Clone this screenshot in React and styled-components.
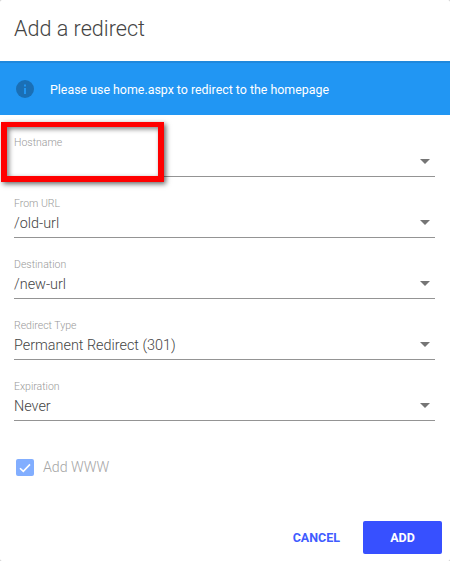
import styled, { createGlobalStyle } from 'styled-components';

const GlobalStyle = createGlobalStyle`
  html, body {
    margin: 0;
    padding: 0;
    background: #c8c8c8;
  }
  * {
    box-sizing: border-box;
  }
`;

const Dialog = styled.div`
  position: relative;
  width: 450px;
  height: 561px;
  background: #fff;
  border-radius: 2px;
  overflow: hidden;
  display: flex;
  flex-direction: column;
  font-family: Roboto, "Liberation Sans", sans-serif;
`;

const Title = styled.h2`
  margin: 0;
  height: 61px;
  padding: 16px 14px 0;
  font-size: 21.6px;
  line-height: 26px;
  font-weight: 300;
  color: #444;
`;

const Banner = styled.div`
  height: 54px;
  background: #2196f3;
  border-top: 2px solid #1f88dc;
  display: flex;
  align-items: center;
  gap: 16px;
  padding: 0 16px;
  color: #fff;
  font-size: 12.4px;
`;

const InfoIcon = styled.svg`
  width: 18px;
  height: 18px;
  flex: none;
`;

const Fields = styled.div`
  display: flex;
  flex-direction: column;
  gap: 18px;
  padding: 19px 15px 0 14px;
`;

const Field = styled.div`
  height: 43px;
  padding-top: 3px;
  border-bottom: 1px solid #949494;
  position: relative;
  display: flex;
  flex-direction: column;
`;

const Label = styled.label`
  font-size: 10.5px;
  line-height: 12px;
  font-weight: 300;
  color: #999;
`;

const Value = styled.div`
  margin-top: 5px;
  font-size: 14.4px;
  line-height: 18px;
  font-weight: 300;
  color: #444;
`;

const Caret = styled.span`
  position: absolute;
  right: 5px;
  bottom: 12px;
  width: 0;
  height: 0;
  border-left: 5px solid transparent;
  border-right: 5px solid transparent;
  border-top: 5px solid #757575;
`;

const CheckRow = styled.div`
  display: flex;
  align-items: center;
  gap: 10px;
  margin: 38px 0 0 16px;
  height: 17px;
`;

const CheckBox = styled.span`
  width: 18px;
  height: 17px;
  border-radius: 2px;
  background: #82aeff;
  display: flex;
  align-items: center;
  justify-content: center;
`;

const CheckLabel = styled.span`
  margin: -1px 0 0 -1px;
  font-size: 14.2px;
  font-weight: 300;
  color: #a6a6a6;
`;

const Actions = styled.div`
  margin-top: auto;
  padding: 0 8px 7px 0;
  display: flex;
  justify-content: flex-end;
  align-items: center;
  gap: 23px;
`;

const Button = styled.button`
  border: 0;
  padding: 0;
  font-family: inherit;
  font-size: 12.5px;
  font-weight: 700;
  background: ${props => props.$primary ? '#3750ff' : 'transparent'};
  color: ${props => props.$primary ? '#fff' : '#3f5cff'};
  width: ${props => props.$primary ? '79px' : 'auto'};
  height: 33px;
  border-radius: 2px;
`;

const Highlight = styled.div`
  position: absolute;
  left: 1px;
  top: 122px;
  width: 163px;
  height: 60px;
  border: 6px solid #f00;
  border-top-width: 5px;
  box-shadow: 2px 2px 5px rgba(0, 0, 0, 0.6), inset 2px 2px 5px rgba(0, 0, 0, 0.5);
`;

const fields = [
  { label: 'Hostname', value: '' },
  { label: 'From URL', value: '/old-url' },
  { label: 'Destination', value: '/new-url' },
  { label: 'Redirect Type', value: 'Permanent Redirect (301)' },
  { label: 'Expiration', value: 'Never' },
];

const App = () => {
  return (
    <>
      <GlobalStyle />
      <Dialog>
        <Title>Add a redirect</Title>
        <Banner>
          <InfoIcon viewBox="0 0 18 18">
            <circle cx="9" cy="9" r="9" fill="#1a6fb5" />
            <rect x="8" y="8" width="2" height="6" fill="#2196f3" />
            <rect x="8" y="4.5" width="2" height="2" fill="#2196f3" />
          </InfoIcon>
          Please use home.aspx to redirect to the homepage
        </Banner>
        <Fields>
          {fields.map(field => (
            <Field key={field.label}>
              <Label>{field.label}</Label>
              <Value>{field.value}</Value>
              <Caret />
            </Field>
          ))}
        </Fields>
        <CheckRow>
          <CheckBox>
            <svg width="12" height="10" viewBox="0 0 12 10">
              <path d="M1 5.2 L4.3 8.4 L11 1.4" fill="none" stroke="#fff" strokeWidth="1.6" />
            </svg>
          </CheckBox>
          <CheckLabel>Add WWW</CheckLabel>
        </CheckRow>
        <Actions>
          <Button>CANCEL</Button>
          <Button $primary>ADD</Button>
        </Actions>
        <Highlight />
      </Dialog>
    </>
  );
};

export default App;
